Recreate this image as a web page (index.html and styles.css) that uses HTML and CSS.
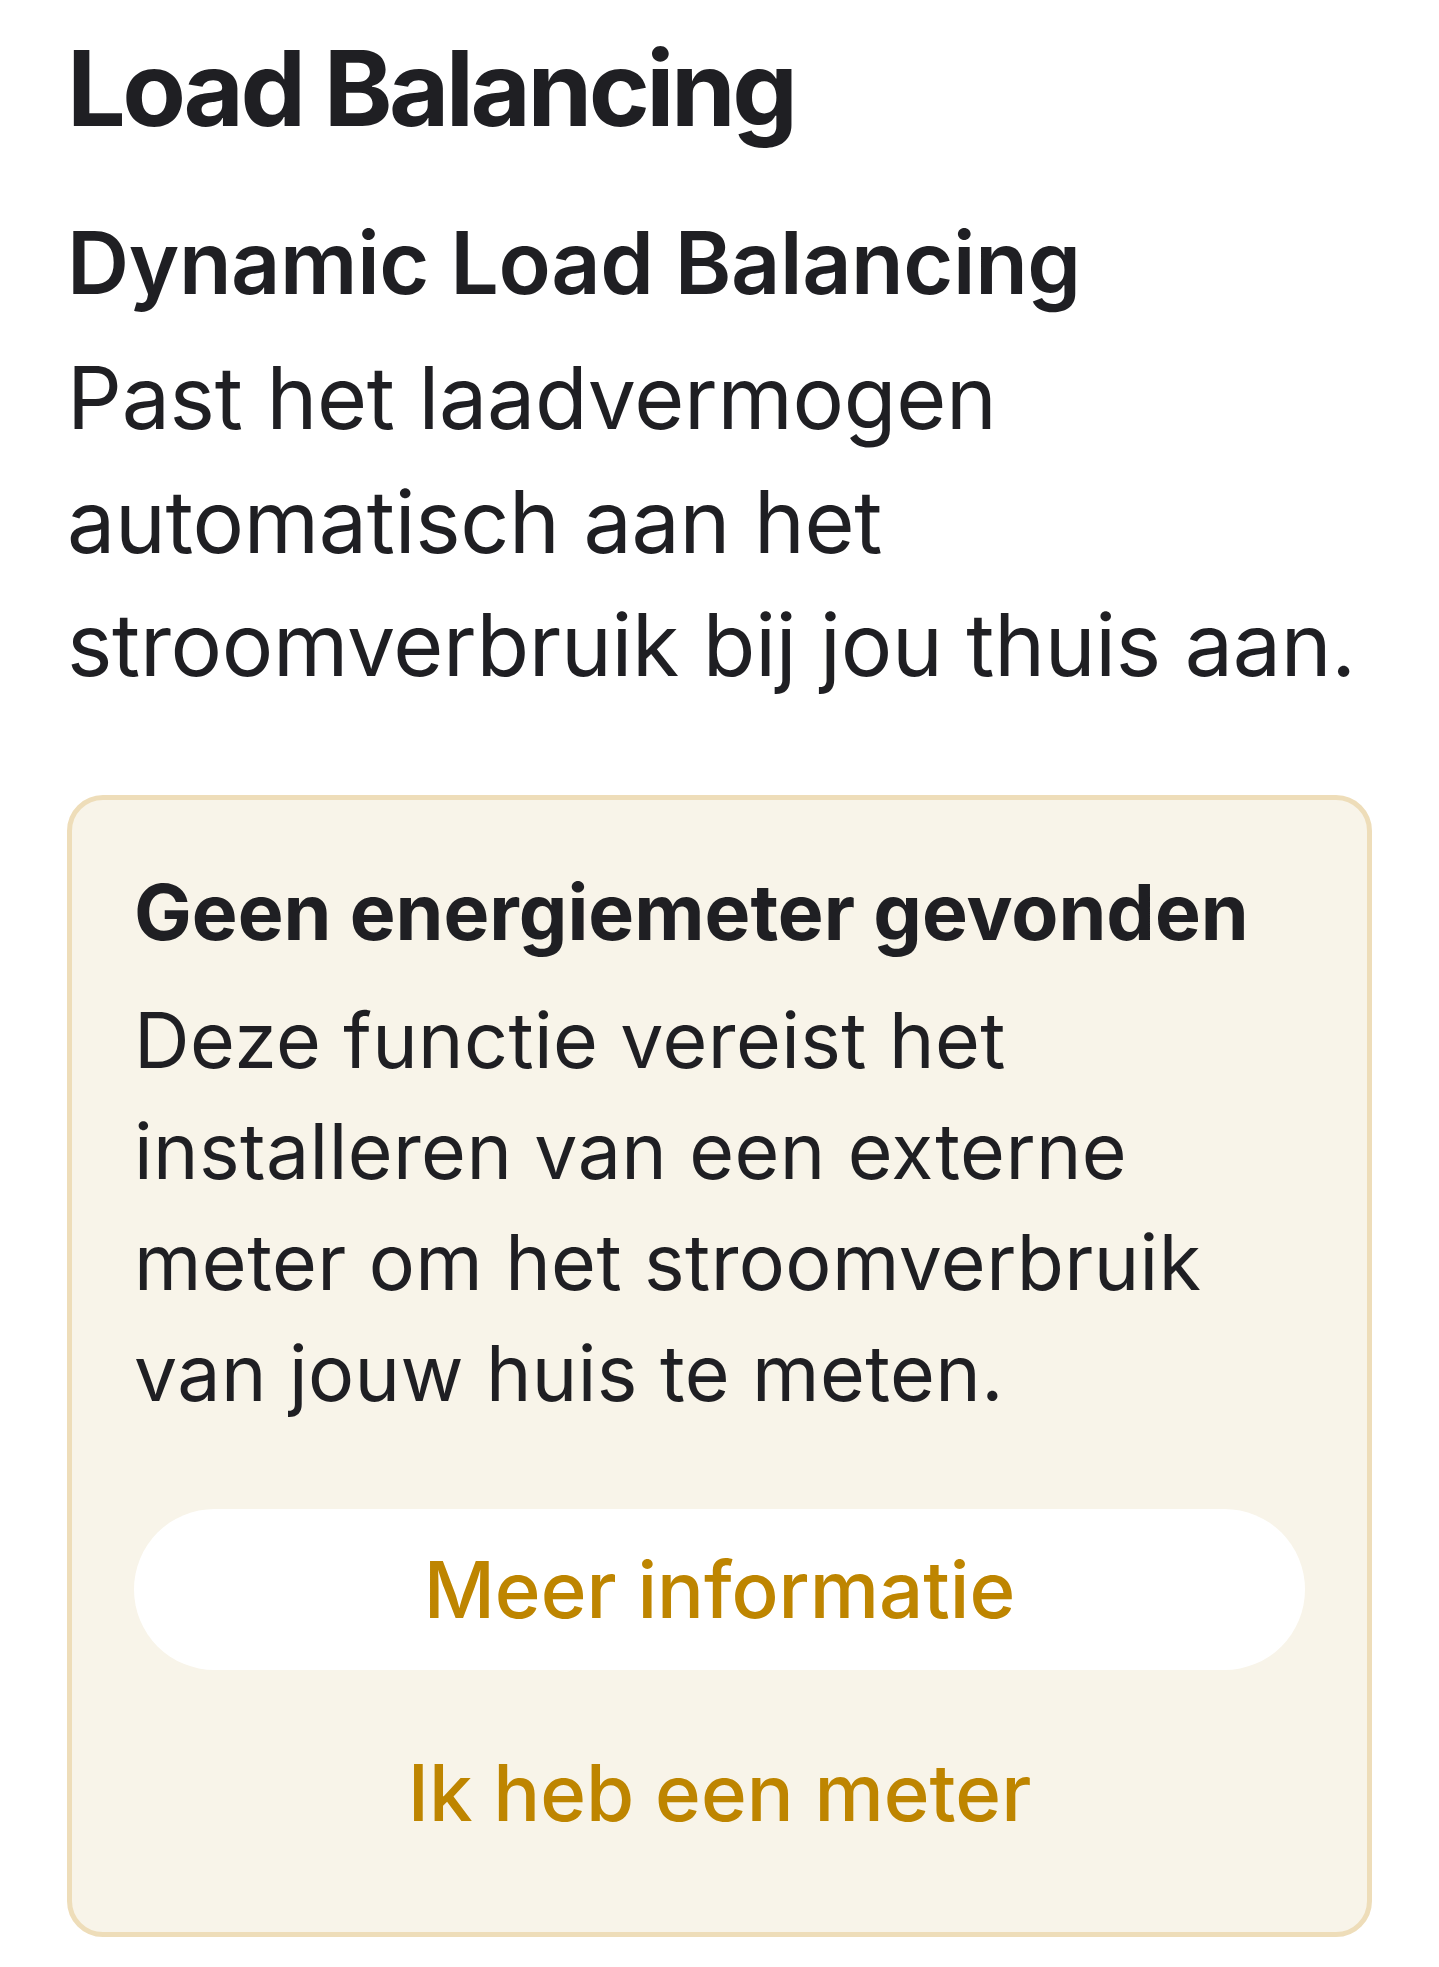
FILE: index.html
```html
<!DOCTYPE html>
<html lang="nl">
<head>
    <meta charset="UTF-8">
    <meta name="viewport" content="width=device-width, initial-scale=1.0">
    <title>Load Balancing</title>
    <link rel="stylesheet" href="styles.css">
</head>
<body>
    <div class="page">
        <h1 class="title">Load Balancing</h1>
        <h2 class="subtitle">Dynamic Load Balancing</h2>
        <p class="intro">Past het laadvermogen automatisch aan het stroomverbruik bij jou thuis aan.</p>

        <div class="notice">
            <h3 class="notice-title">Geen energiemeter gevonden</h3>
            <p class="notice-text">Deze functie vereist het installeren van een externe meter om het stroomverbruik van jouw huis te meten.</p>
            <div class="notice-actions">
                <button class="btn btn-pill">Meer informatie</button>
                <button class="btn btn-plain">Ik heb een meter</button>
            </div>
        </div>
    </div>
</body>
</html>
```

FILE: styles.css
```css
* {
    margin: 0;
    padding: 0;
    box-sizing: border-box;
}

body {
    font-family: Inter, "Noto Sans", sans-serif;
    color: #1f1f23;
    background: #fff;
}

.page {
    padding: 26px 67px 0;
    width: 1439px;
}

.title {
    font-size: 104px;
    font-weight: 700;
    line-height: 125px;
    letter-spacing: -3.5px;
}

.subtitle {
    margin-top: 61px;
    font-size: 86px;
    font-weight: 600;
    line-height: 103px;
    letter-spacing: -0.4px;
}

.intro {
    margin-top: 22px;
    font-size: 86px;
    font-weight: 400;
    line-height: 123.5px;
    letter-spacing: -0.3px;
    margin-right: -10px;
}

/* Notice card */
.notice {
    margin-top: 87px;
    background: #f8f4e9;
    border: 5px solid #eeddb9;
    border-radius: 36px;
    padding: 62px 62px 59px;
}

.notice-title {
    font-size: 77px;
    font-weight: 700;
    line-height: 100px;
}

.notice-text {
    margin-top: 23px;
    font-size: 77px;
    font-weight: 400;
    line-height: 111px;
    letter-spacing: 0.4px;
}

.notice-actions {
    margin-top: 80px;
    display: flex;
    flex-direction: column;
    gap: 42px;
}

.btn {
    height: 161px;
    border: none;
    font-family: inherit;
    font-size: 78px;
    font-weight: 500;
    color: #be8500;
    background: none;
    cursor: pointer;
}

.btn-pill {
    background: #fff;
    border-radius: 81px;
}
```
